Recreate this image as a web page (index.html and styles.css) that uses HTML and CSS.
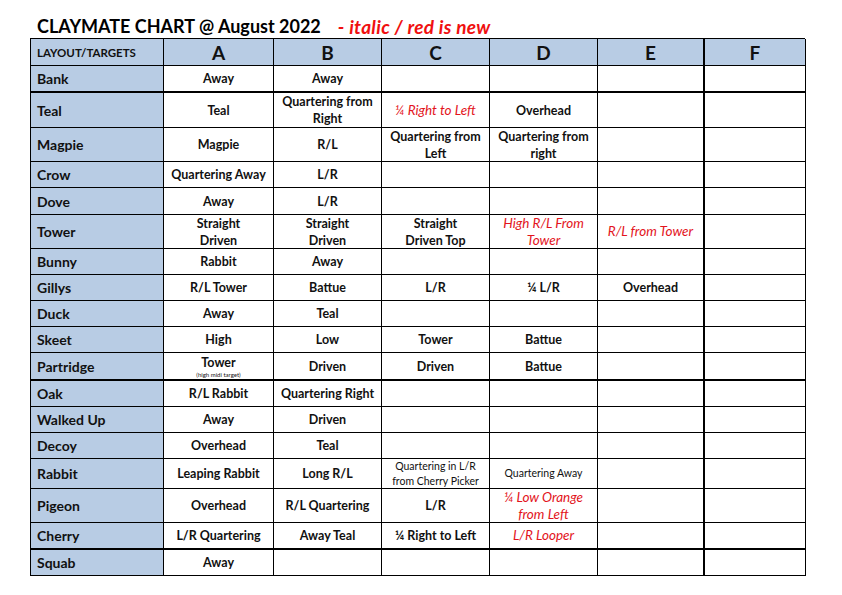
FILE: index.html
```html
<!DOCTYPE html>
<html lang="en">
<head>
<meta charset="utf-8">
<title>Claymate Chart</title>
<link rel="stylesheet" href="styles.css">
</head>
<body>
<div class="page">
  <h1 class="title"><span>CLAYMATE CHART @ August 2022</span><span class="note">- italic / red is new</span></h1>
  <div class="chart">
    <div class="c hd lab small">LAYOUT/TARGETS</div><div class="c hd big">A</div><div class="c hd big">B</div><div class="c hd big">C</div><div class="c hd big">D</div><div class="c hd big e">E</div><div class="c hd big">F</div>

    <div class="c lab thick">Bank</div><div class="c thick">Away</div><div class="c thick">Away</div><div class="c thick"></div><div class="c thick"></div><div class="c thick e"></div><div class="c thick"></div>

    <div class="c lab">Teal</div><div class="c">Teal</div><div class="c">Quartering from<br>Right</div><div class="c new">¼ Right to Left</div><div class="c">Overhead</div><div class="c e"></div><div class="c"></div>

    <div class="c lab">Magpie</div><div class="c">Magpie</div><div class="c">R/L</div><div class="c">Quartering from<br>Left</div><div class="c">Quartering from<br>right</div><div class="c e"></div><div class="c"></div>

    <div class="c lab">Crow</div><div class="c">Quartering Away</div><div class="c">L/R</div><div class="c"></div><div class="c"></div><div class="c e"></div><div class="c"></div>

    <div class="c lab">Dove</div><div class="c">Away</div><div class="c">L/R</div><div class="c"></div><div class="c"></div><div class="c e"></div><div class="c"></div>

    <div class="c lab">Tower</div><div class="c">Straight<br>Driven</div><div class="c">Straight<br>Driven</div><div class="c">Straight<br>Driven Top</div><div class="c new">High R/L From<br>Tower</div><div class="c new e">R/L from Tower</div><div class="c"></div>

    <div class="c lab">Bunny</div><div class="c">Rabbit</div><div class="c">Away</div><div class="c"></div><div class="c"></div><div class="c e"></div><div class="c"></div>

    <div class="c lab">Gillys</div><div class="c">R/L Tower</div><div class="c">Battue</div><div class="c">L/R</div><div class="c">¼ L/R</div><div class="c e">Overhead</div><div class="c"></div>

    <div class="c lab">Duck</div><div class="c">Away</div><div class="c">Teal</div><div class="c"></div><div class="c"></div><div class="c e"></div><div class="c"></div>

    <div class="c lab">Skeet</div><div class="c">High</div><div class="c">Low</div><div class="c">Tower</div><div class="c">Battue</div><div class="c e"></div><div class="c"></div>

    <div class="c lab thick">Partridge</div><div class="c thick"><span>Tower</span><span class="tiny">(high midi target)</span></div><div class="c thick">Driven</div><div class="c thick">Driven</div><div class="c thick">Battue</div><div class="c thick e"></div><div class="c thick"></div>

    <div class="c lab">Oak</div><div class="c">R/L Rabbit</div><div class="c">Quartering Right</div><div class="c"></div><div class="c"></div><div class="c e"></div><div class="c"></div>

    <div class="c lab">Walked Up</div><div class="c">Away</div><div class="c">Driven</div><div class="c"></div><div class="c"></div><div class="c e"></div><div class="c"></div>

    <div class="c lab">Decoy</div><div class="c">Overhead</div><div class="c">Teal</div><div class="c"></div><div class="c"></div><div class="c e"></div><div class="c"></div>

    <div class="c lab">Rabbit</div><div class="c">Leaping Rabbit</div><div class="c">Long R/L</div><div class="c light">Quartering in L/R<br>from Cherry Picker</div><div class="c light">Quartering Away</div><div class="c e"></div><div class="c"></div>

    <div class="c lab">Pigeon</div><div class="c">Overhead</div><div class="c">R/L Quartering</div><div class="c">L/R</div><div class="c new">¼ Low Orange<br>from Left</div><div class="c e"></div><div class="c"></div>

    <div class="c lab thick">Cherry</div><div class="c thick">L/R Quartering</div><div class="c thick">Away Teal</div><div class="c thick">¼ Right to Left</div><div class="c thick new">L/R Looper</div><div class="c thick e"></div><div class="c thick"></div>

    <div class="c lab">Squab</div><div class="c">Away</div><div class="c"></div><div class="c"></div><div class="c"></div><div class="c e"></div><div class="c"></div>
  </div>
</div>
</body>
</html>
```
FILE: styles.css
```css
html, body {
  margin: 0;
  padding: 0;
  background: #ffffff;
}

.page {
  padding: 15px 0 0 30px;
  font-family: Lato, "Open Sans", "Liberation Sans", sans-serif;
  color: #000;
}

.title {
  margin: 0;
  padding-left: 7px;
  height: 23px;
  line-height: 23px;
  font-size: 18px;
  font-weight: 700;
  display: flex;
  gap: 17px;
  white-space: nowrap;
}

.title .note {
  color: #f01010;
  font-style: italic;
  font-size: 19px;
  letter-spacing: 0.3px;
}

.chart {
  display: grid;
  width: 775px;
  grid-template-columns: 133px 110px 108px 108px 108px 107px 101px;
  grid-template-rows: 27px 27px 35px 34px 26px 27px 34px 26px 26px 26px 26px 28px 26px 26px 26px 30px 34px 27px 26px;
  border-top: 1px solid #000;
  border-left: 1px solid #000;
  box-sizing: border-box;
}

.c {
  box-sizing: border-box;
  border-right: 1px solid #000;
  border-bottom: 1px solid #000;
  display: flex;
  flex-direction: column;
  align-items: center;
  justify-content: center;
  text-align: center;
  font-size: 12.5px;
  font-weight: 700;
  line-height: 17px;
  color: #111;
  white-space: nowrap;
}

.c.lab {
  background: #b8cce4;
  align-items: flex-start;
  padding-left: 6px;
  font-size: 14px;
}

.c.hd {
  background: #b8cce4;
}

.c.big {
  font-size: 19px;
}

.c.lab.small {
  font-size: 11.5px;
}

.c.e {
  border-right-width: 2px;
}

.c.thick {
  border-bottom-width: 2px;
}

.c.new {
  color: #e3141c;
  font-style: italic;
  font-weight: 400;
  font-size: 13.5px;
}

.c.light {
  font-weight: 400;
  font-size: 10.5px;
  line-height: 15px;
}

.tiny {
  font-size: 6px;
  line-height: 7px;
  font-weight: 400;
}
```
